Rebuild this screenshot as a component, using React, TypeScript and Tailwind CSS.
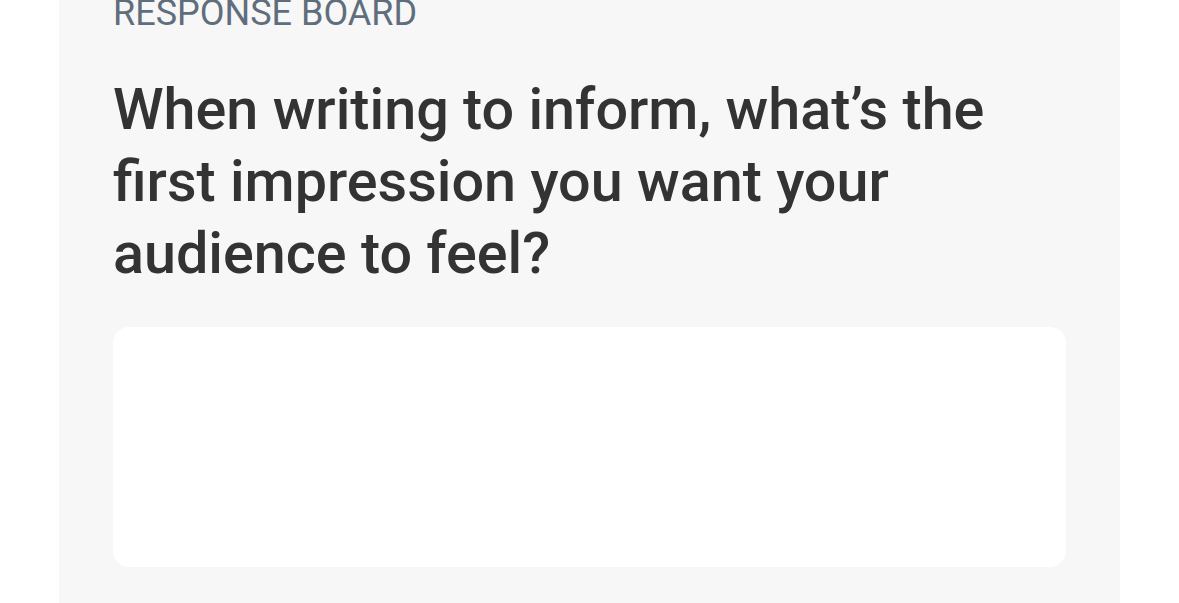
import React from 'react'

const font = { fontFamily: 'Roboto, "Noto Sans", sans-serif' }

export default function App() {
  return (
    <div className="min-h-screen bg-white overflow-hidden" style={font}>
      <div className="mx-auto w-[1061px] bg-[#f7f7f7] px-[54px] pb-10 h-[620px]">
        <div className="mt-[-5px] text-[36px] leading-none text-[#5f6e7c] uppercase">Response Board</div>
        <h1 className="mt-[43px] text-[57.5px] leading-[72px] font-medium text-[#333333]">
          When writing to inform, what’s the first impression you want your audience to feel?
        </h1>
        <textarea
          className="mt-[37px] block w-full h-[240px] rounded-2xl bg-white resize-none outline-none p-6 text-2xl text-[#333333]"
          aria-label="Response"
        />
      </div>
    </div>
  )
}
